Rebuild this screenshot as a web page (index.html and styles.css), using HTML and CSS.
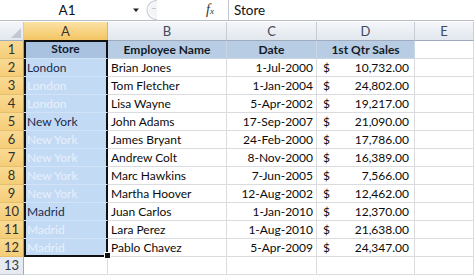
FILE: index.html
```html
<!DOCTYPE html>
<html>
<head>
  <meta charset="UTF-8">
  <title>Sales</title>
  <link rel="stylesheet" href="styles.css">
</head>
<body>
  <div id="formula-bar">
    <div class="name-box">A1</div>
    <div class="name-arrow">
      <svg width="8" height="6" viewBox="0 0 8 6"><path d="M1 1.5h6L4 5z" fill="#222"/></svg>
    </div>
    <div class="grip">
      <svg width="22" height="20" viewBox="0 0 22 20">
        <path d="M14 0.5 A10 9.5 0 0 0 14 19.5" fill="none" stroke="#c9cfd8" stroke-width="1.2"/>
        <path d="M14 2 A8 8 0 0 0 14 18" fill="#f2f4f7"/>
        <path d="M9 8.5h4" stroke="#c3c8cf" stroke-width="1"/>
      </svg>
    </div>
    <div class="fx"><i>f</i><small>x</small></div>
    <div class="formula">Store</div>
  </div>

  <div id="sheet">
    <div class="corner"><span></span></div>
    <div class="col-head sel">A</div>
    <div class="col-head">B</div>
    <div class="col-head">C</div>
    <div class="col-head">D</div>
    <div class="col-head">E</div>

    <div class="row-head sel">1</div>
    <div class="cell title in-sel first center">Store</div>
    <div class="cell title center">Employee Name</div>
    <div class="cell title center">Date</div>
    <div class="cell title center">1st Qtr Sales</div>
    <div class="cell"></div>

    <div class="row-head sel">2</div>
    <div class="cell in-sel">London</div>
    <div class="cell">Brian Jones</div>
    <div class="cell right">1-Jul-2000</div>
    <div class="cell money"><span>$</span><span>10,732.00</span></div>
    <div class="cell"></div>

    <div class="row-head sel">3</div>
    <div class="cell in-sel hid">London</div>
    <div class="cell">Tom Fletcher</div>
    <div class="cell right">1-Jan-2004</div>
    <div class="cell money"><span>$</span><span>24,802.00</span></div>
    <div class="cell"></div>

    <div class="row-head sel">4</div>
    <div class="cell in-sel hid">London</div>
    <div class="cell">Lisa Wayne</div>
    <div class="cell right">5-Apr-2002</div>
    <div class="cell money"><span>$</span><span>19,217.00</span></div>
    <div class="cell"></div>

    <div class="row-head sel">5</div>
    <div class="cell in-sel">New York</div>
    <div class="cell">John Adams</div>
    <div class="cell right">17-Sep-2007</div>
    <div class="cell money"><span>$</span><span>21,090.00</span></div>
    <div class="cell"></div>

    <div class="row-head sel">6</div>
    <div class="cell in-sel hid">New York</div>
    <div class="cell">James Bryant</div>
    <div class="cell right">24-Feb-2000</div>
    <div class="cell money"><span>$</span><span>17,786.00</span></div>
    <div class="cell"></div>

    <div class="row-head sel">7</div>
    <div class="cell in-sel hid">New York</div>
    <div class="cell">Andrew Colt</div>
    <div class="cell right">8-Nov-2000</div>
    <div class="cell money"><span>$</span><span>16,389.00</span></div>
    <div class="cell"></div>

    <div class="row-head sel">8</div>
    <div class="cell in-sel hid">New York</div>
    <div class="cell">Marc Hawkins</div>
    <div class="cell right">7-Jun-2005</div>
    <div class="cell money"><span>$</span><span>7,566.00</span></div>
    <div class="cell"></div>

    <div class="row-head sel">9</div>
    <div class="cell in-sel hid">New York</div>
    <div class="cell">Martha Hoover</div>
    <div class="cell right">12-Aug-2002</div>
    <div class="cell money"><span>$</span><span>12,462.00</span></div>
    <div class="cell"></div>

    <div class="row-head sel">10</div>
    <div class="cell in-sel">Madrid</div>
    <div class="cell">Juan Carlos</div>
    <div class="cell right">1-Jan-2010</div>
    <div class="cell money"><span>$</span><span>12,370.00</span></div>
    <div class="cell"></div>

    <div class="row-head sel">11</div>
    <div class="cell in-sel hid">Madrid</div>
    <div class="cell">Lara Perez</div>
    <div class="cell right">1-Aug-2010</div>
    <div class="cell money"><span>$</span><span>21,638.00</span></div>
    <div class="cell"></div>

    <div class="row-head sel">12</div>
    <div class="cell in-sel hid last">Madrid<span class="handle"></span></div>
    <div class="cell">Pablo Chavez</div>
    <div class="cell right">5-Apr-2009</div>
    <div class="cell money"><span>$</span><span>24,347.00</span></div>
    <div class="cell"></div>

    <div class="row-head">13</div>
    <div class="cell"></div>
    <div class="cell"></div>
    <div class="cell"></div>
    <div class="cell"></div>
    <div class="cell"></div>
  </div>
</body>
</html>
```

FILE: styles.css
```css
body {
  margin: 0;
  padding: 0;
  background-color: #fff;
  font-family: Lato, "Liberation Sans", sans-serif;
  color: #111;
  overflow: hidden;
}

#formula-bar {
  display: flex;
  align-items: center;
  height: 20px;
  border-bottom: 1px solid #b7bec8;
  margin-bottom: 1px;
  font-size: 13.5px;
}

.name-box {
  width: 130px;
  text-align: center;
  padding-left: 4px;
  box-sizing: border-box;
}

.name-arrow {
  width: 12px;
  display: flex;
  justify-content: center;
}

.grip {
  width: 22px;
  height: 20px;
  margin-left: 1px;
}

.fx {
  width: 14px;
  margin-left: 41px;
  font-family: "Liberation Serif", serif;
  font-size: 14px;
  color: #333;
}

.fx small {
  font-size: 9px;
  font-style: italic;
}

.formula {
  flex: 1;
  margin-left: 8px;
  padding-left: 5px;
  border-left: 1px solid #c4cad3;
  height: 20px;
  line-height: 20px;
  color: #111;
}

#sheet {
  display: grid;
  grid-template-columns: 24px 84px 119px 90px 98px 1fr;
  grid-template-rows: 19px repeat(13, 18px);
  font-size: 12px;
}

.col-head,
.corner {
  background: linear-gradient(#f4f6f9, #e2e7ee);
  border-right: 1px solid #c6ccd6;
  border-bottom: 1px solid #9eabbf;
  color: #3e4b5c;
  font-size: 13px;
  line-height: 18px;
  text-align: center;
}

.col-head.sel {
  background: linear-gradient(#fbe2a4, #f3c564);
  border-right-color: #e2b15a;
  border-bottom-color: #c39a4c;
  color: #3b3428;
}

.corner {
  display: flex;
  align-items: flex-end;
  justify-content: flex-end;
}

.corner span {
  width: 0;
  height: 0;
  margin: 0 2px 2px 0;
  border-left: 10px solid transparent;
  border-bottom: 10px solid #c1c8d1;
}

.row-head {
  background: #e7ebf0;
  border-right: 1px solid #9eabbf;
  border-bottom: 1px solid #c6ccd6;
  color: #2c3a4b;
  font-size: 13px;
  line-height: 17px;
  text-align: center;
}

.row-head.sel {
  background: linear-gradient(#f9da94, #f5cd78);
  border-right-color: #c39a4c;
  border-bottom-color: #e7bd6e;
  color: #35302a;
}

.cell {
  border-right: 1px solid #dadcdf;
  border-bottom: 1px solid #dadcdf;
  line-height: 17px;
  padding: 0 3px;
  white-space: nowrap;
  overflow: hidden;
  color: #0c0c0c;
}

.cell.title {
  background: #b8cce4;
  border-color: #c9d6e6;
  font-weight: bold;
  color: #131a26;
}

.cell.in-sel {
  background: #c3daf5;
  border-right-color: #111;
  border-bottom-color: #d3e3f7;
  color: #1a2a4c;
  box-shadow: inset 2px 0 #111, inset -1px 0 #111;
}

.cell.in-sel.first {
  box-shadow: inset 2px 0 #111, inset -1px 0 #111, inset 0 2px #111;
  margin-top: -1px;
}

.cell.in-sel.last {
  position: relative;
  overflow: visible;
  border-bottom: 2px solid #111;
}

.cell.title.in-sel {
  background: #a9c2e0;
  color: #131a2e;
}

.cell.hid {
  color: #e8f0fb;
}

.center {
  text-align: center;
}

.right {
  text-align: right;
  padding-right: 3px;
}

.money {
  display: flex;
  justify-content: space-between;
  padding: 0 5px 0 6px;
}

.handle {
  position: absolute;
  right: -4px;
  bottom: -4px;
  width: 5px;
  height: 5px;
  background: #111;
  border: 1px solid #fff;
}
```
